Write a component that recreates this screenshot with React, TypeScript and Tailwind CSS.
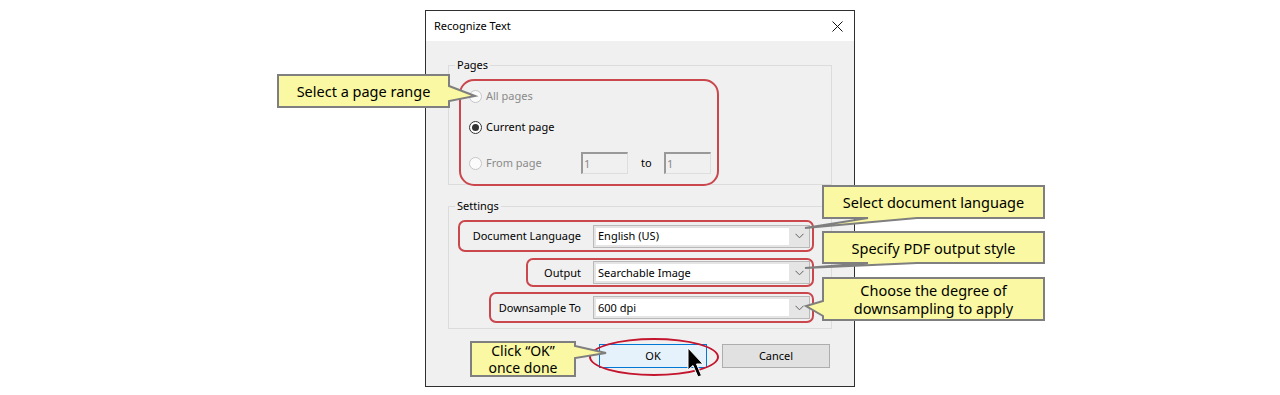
import React from 'react';

const RED = 'border-[#c9474d]';

function Radio({ checked, disabled, label }: { checked?: boolean; disabled?: boolean; label: string }) {
  return (
    <div className="flex items-center h-[24px]">
      <span
        className={`ml-[8px] w-[13px] h-[13px] rounded-full border flex items-center justify-center ${
          disabled ? 'border-[#c6c6c6] bg-[#fbfbfb]' : 'border-[#333333] bg-white'
        }`}
      >
        {checked && <span className="w-[7px] h-[7px] rounded-full bg-[#333333]" />}
      </span>
      <span className={`ml-[4px] ${disabled ? 'text-[#8a8a8a]' : 'text-black'}`}>{label}</span>
    </div>
  );
}

function TextBox({ value }: { value: string }) {
  return (
    <div className="w-[47px] h-[22px] border-t-2 border-l-2 border-r border-b border-t-[#999999] border-l-[#999999] border-r-[#dedede] border-b-[#dedede] bg-[#f0f0f0] flex items-center pl-[1px] text-[#8a8a8a]">
      {value}
    </div>
  );
}

function Combo({ value }: { value: string }) {
  return (
    <div className="w-[217px] h-[23px] border border-[#b9b9b9] bg-[#e5e5e5] flex p-[2px] pr-0">
      <div className="flex-1 bg-white flex items-center pl-[2px] text-black">{value}</div>
      <div className="w-[20px] flex items-center justify-center">
        <svg width="9" height="6" viewBox="0 0 9 6">
          <polyline points="0.5,0.8 4.5,4.8 8.5,0.8" fill="none" stroke="#606060" strokeWidth="1" />
        </svg>
      </div>
    </div>
  );
}

function SettingRow({ label, value, w, h, mt }: { label: string; value: string; w: string; h: string; mt: string }) {
  return (
    <div className={`${w} ${h} ${mt} border-2 ${RED} rounded-[7px] flex items-center justify-end pr-[2px]`}>
      <span className="mr-[12px] text-black">{label}</span>
      <Combo value={value} />
    </div>
  );
}

export default function App() {
  return (
    <div className="relative w-[1280px] h-[395px] bg-white overflow-hidden font-['Noto_Sans',sans-serif] text-[11px] leading-[16px]">
      <div className="pt-[10px] pl-[425px]">
        <div className="w-[430px] h-[377px] border border-[#2f2f2f] flex flex-col bg-[#f0f0f0]">
          {/* title bar */}
          <div className="h-[30px] bg-white flex items-center justify-between pl-[8px] pr-[11px]">
            <span className="text-black">Recognize Text</span>
            <svg width="11" height="11" viewBox="0 0 11 11">
              <path d="M0.5 0.5 L10.5 10.5 M10.5 0.5 L0.5 10.5" stroke="#111" strokeWidth="1" />
            </svg>
          </div>

          {/* body */}
          <div className="flex-1 pl-[22px] pt-[16px]">
            <fieldset className="w-[384px] h-[128px] border border-[#dcdcdc]">
              <legend className="ml-[6px] px-[2px] text-black">Pages</legend>
              <div className={`ml-[10px] mt-[6px] w-[260px] h-[107px] border-2 ${RED} rounded-[15px] flex flex-col`}>
                <div className="mt-[3px]">
                  <Radio disabled label="All pages" />
                </div>
                <div className="mt-[7px]">
                  <Radio checked label="Current page" />
                </div>
                <div className="mt-[12px] flex items-center">
                  <div className="w-[120px]">
                    <Radio disabled label="From page" />
                  </div>
                  <TextBox value="1" />
                  <span className="w-[36px] pl-[13px] text-black">to</span>
                  <TextBox value="1" />
                </div>
              </div>
            </fieldset>

            <fieldset className="mt-[13px] w-[384px] h-[131px] border border-[#dcdcdc]">
              <legend className="ml-[6px] px-[2px] text-black">Settings</legend>
              <div className="flex flex-col items-end pr-[17px]">
                <SettingRow label="Document Language" value="English (US)" w="w-[356px]" h="h-[32px]" mt="mt-[6px]" />
                <SettingRow label="Output" value="Searchable Image" w="w-[288px]" h="h-[29px]" mt="mt-[6px]" />
                <SettingRow label="Downsample To" value="600 dpi" w="w-[325px]" h="h-[31px]" mt="mt-[5px]" />
              </div>
            </fieldset>

            <div className="mt-[15px] w-[384px] flex justify-end gap-[15px] pr-[2px]">
              <div className="w-[108px] h-[24px] border border-[#0078d7] bg-[#e5f1fb] flex items-center justify-center text-black">
                OK
              </div>
              <div className="w-[108px] h-[24px] border border-[#adadad] bg-[#e1e1e1] flex items-center justify-center text-black">
                Cancel
              </div>
            </div>
          </div>
        </div>
      </div>

      {/* annotations */}
      <div className="absolute left-[589px] top-[338px] w-[130px] h-[38px] rounded-[50%] border-2 border-[#c4152e]" />

      <svg className="absolute left-0 top-0 pointer-events-none" width="1280" height="395" viewBox="0 0 1280 395">
        <g fill="#faf8a2" stroke="#7f7f7f" strokeWidth="2" strokeLinejoin="miter">
          <path d="M278 75 H449 V86 L475 96 L449 101 V107 H278 Z" />
          <path d="M823 186 H1044 V218 H917 L805 228 L868 218 H823 Z" />
          <path d="M823 232 H1044 V263 H917 L805 268 L868 263 H823 Z" />
          <path d="M823 278 H1044 V320 H823 V316 L806 306 L823 301 Z" />
          <path d="M471 342 H575 V346 L606 353 L575 358 V376 H471 Z" />
        </g>
        <path
          d="M688 348 L688 370 L693 365.5 L698 377 L701.5 375.5 L696.5 364 L703 364 Z"
          fill="#000"
          stroke="#fff"
          strokeWidth="1"
        />
      </svg>

      <div className="absolute left-[278px] top-[75px] w-[171px] h-[32px] flex items-center justify-center text-[14.5px] text-black">
        Select a page range
      </div>
      <div className="absolute left-[823px] top-[186px] w-[221px] h-[32px] flex items-center justify-center text-[14.5px] text-black">
        Select document language
      </div>
      <div className="absolute left-[823px] top-[232px] w-[221px] h-[31px] flex items-center justify-center text-[14.5px] text-black">
        Specify PDF output style
      </div>
      <div className="absolute left-[823px] top-[278px] w-[221px] h-[42px] flex flex-col items-center justify-center text-[14.5px] leading-[18px] text-black">
        <span>Choose the degree of</span>
        <span>downsampling to apply</span>
      </div>
      <div className="absolute left-[471px] top-[342px] w-[104px] h-[34px] flex flex-col items-center justify-center text-[14px] leading-[17px] text-black">
        <span className="leading-[17px]">Click “OK”</span>
        <span className="leading-[17px]">once done</span>
      </div>
    </div>
  );
}
